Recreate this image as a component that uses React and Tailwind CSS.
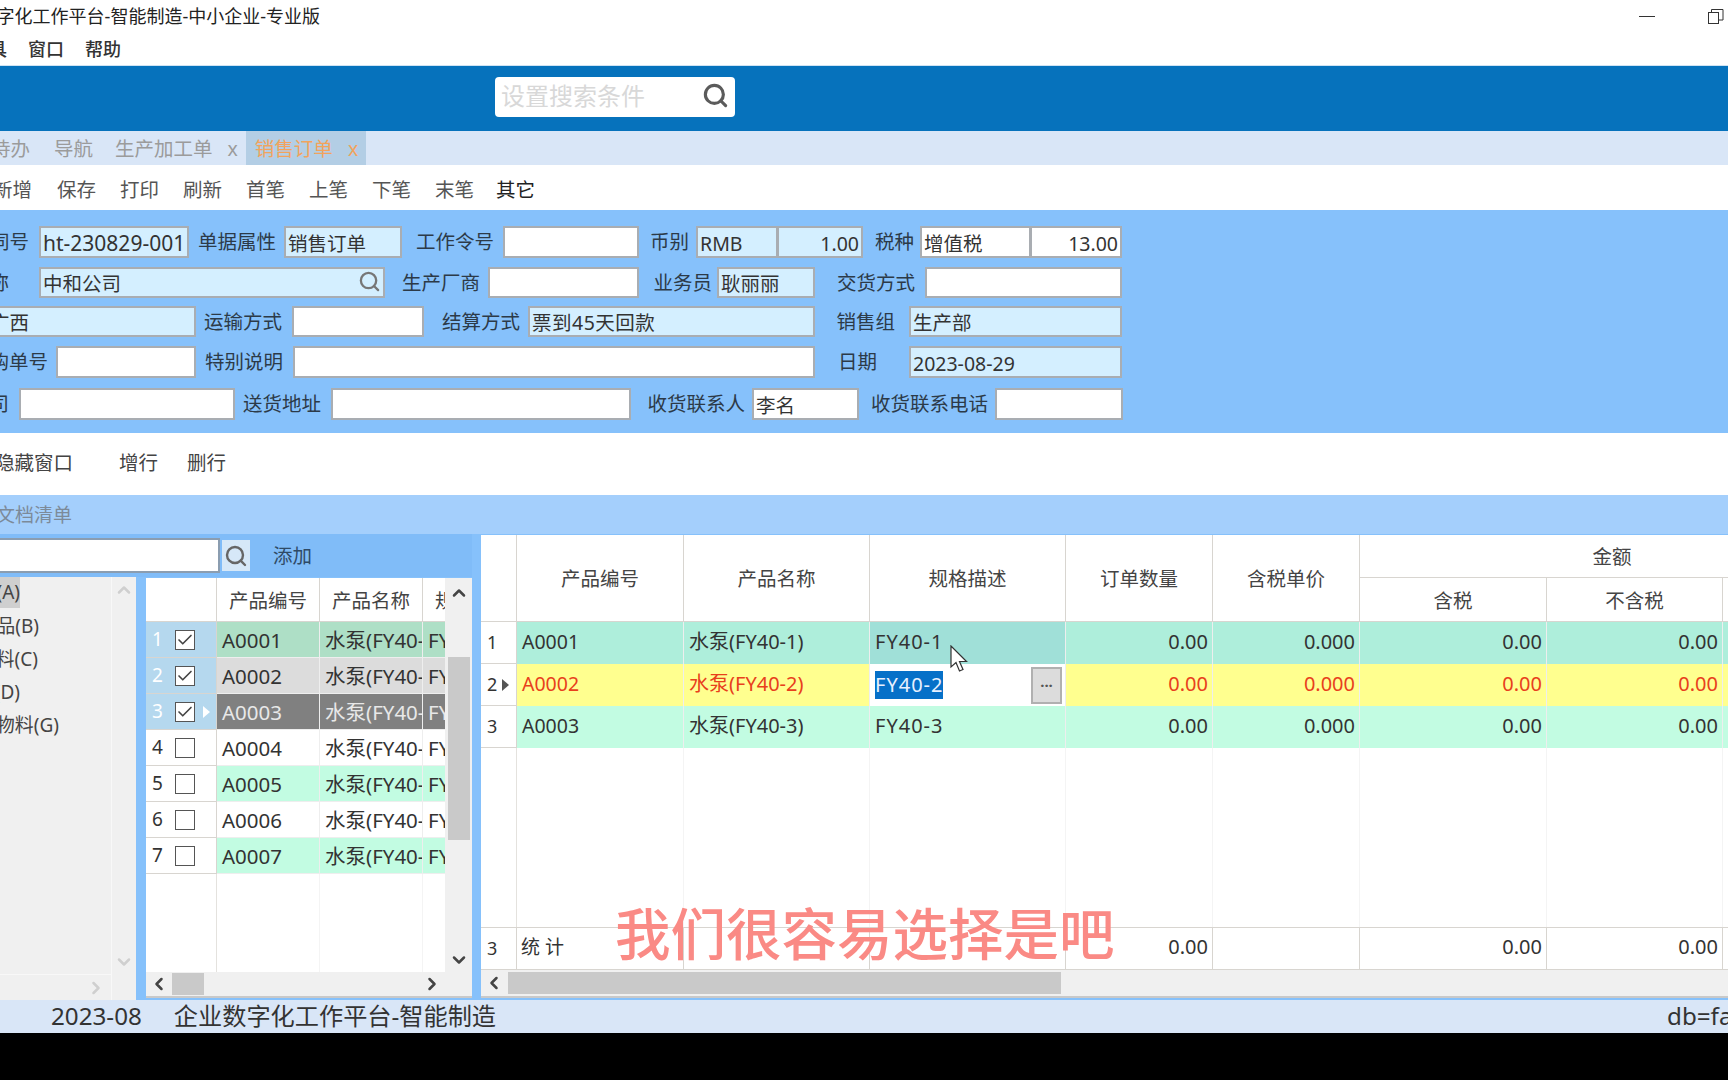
import { Search, ChevronUp, ChevronDown, ChevronLeft, ChevronRight, Check } from "lucide-react";

const leftRows = [
  { n: "1", code: "A0001", on: true, head: "bg-[#b5d8ee] text-white", cell: "bg-[#aedfc6] text-[#333]" },
  { n: "2", code: "A0002", on: true, head: "bg-[#b5d8ee] text-white", cell: "bg-[#dcdcdc] text-[#333]" },
  { n: "3", code: "A0003", on: true, cur: true, head: "bg-[#b5d8ee] text-white", cell: "bg-[#808080] text-[#e8e8e8]" },
  { n: "4", code: "A0004", head: "bg-white text-[#333]", cell: "bg-white text-[#333]" },
  { n: "5", code: "A0005", head: "bg-white text-[#333]", cell: "bg-[#c2fce2] text-[#333]" },
  { n: "6", code: "A0006", head: "bg-white text-[#333]", cell: "bg-white text-[#333]" },
  { n: "7", code: "A0007", head: "bg-white text-[#333]", cell: "bg-[#c2fce2] text-[#333]" },
];

const rightCols = "grid grid-cols-[36px_167px_186px_196px_147px_147px_187px_176px_1fr]";

function Lbl({ className, children }) {
  return (
    <div className={"flex h-full shrink-0 items-center justify-end overflow-hidden whitespace-nowrap text-[19.5px] text-[#2c3a48] " + className}>
      {children}
    </div>
  );
}

function Box({ className, children }) {
  return (
    <div className={"flex h-full shrink-0 items-center overflow-hidden whitespace-nowrap border-2 border-[#a9adb2] px-[2px] pt-[3px] text-[19.5px] text-[#333] " + className}>
      {children}
    </div>
  );
}

function NumCell({ className, children }) {
  return <div className={"flex items-center justify-end border-r border-[#eeeeee] pb-[2px] pr-[4px] text-[20px] " + className}>{children}</div>;
}

function TextCell({ className, children }) {
  return <div className={"flex items-center whitespace-nowrap border-r border-[#eeeeee] pb-[2px] pl-[5px] text-[20px] " + className}>{children}</div>;
}

function RightRow({ n, code, name, spec, row, text, specCell, mark }) {
  return (
    <div className={rightCols + " h-[42px] " + text}>
      <div className="flex items-center border-r border-b border-[#d8d5d0] bg-white pl-[6px] text-[18px] text-[#333]">
        {n}
        {mark && <div className="ml-[5px] h-0 w-0 border-y-[6px] border-l-[7px] border-y-transparent border-l-[#555]" />}
      </div>
      <TextCell className={row}><span className="text-[19.5px]">{code}</span></TextCell>
      <TextCell className={row}>{name}</TextCell>
      {specCell || <TextCell className={row}><span className="tracking-[1px]">{spec}</span></TextCell>}
      <NumCell className={row}>0.00</NumCell>
      <NumCell className={row}>0.000</NumCell>
      <NumCell className={row}>0.00</NumCell>
      <NumCell className={row}>0.00</NumCell>
      <div className={row} />
    </div>
  );
}

export default function App() {
  return (
    <div className="relative flex h-screen w-screen flex-col overflow-hidden bg-white font-['Noto_Sans','Noto_Sans_CJK_SC',sans-serif]">
      {/* title */}
      <div className="flex h-[33px] shrink-0 items-center justify-between">
        <div className="flex w-[320px] justify-end overflow-hidden whitespace-nowrap text-[18px] text-[#222]">企业数字化工作平台-智能制造-中小企业-专业版</div>
        <div className="flex items-center pr-[4px]">
          <div className="mr-[53px] h-px w-[16px] bg-[#333]" />
          <svg width="16" height="15" viewBox="0 0 16 15" fill="none" stroke="#333" strokeWidth="1">
            <rect x="0.5" y="3.5" width="10" height="11" fill="white" />
            <path d="M3.5 3.5V0.5H15V11H10.5" />
          </svg>
        </div>
      </div>
      <div className="flex h-[32px] shrink-0 items-center text-[18px] font-medium text-[#333]">
        <div className="flex w-[7px] justify-end overflow-hidden whitespace-nowrap">工具</div>
        <div className="ml-[21px]">窗口</div>
        <div className="ml-[21px]">帮助</div>
      </div>

      {/* blue band */}
      <div className="flex h-[66px] shrink-0 items-center border-t border-[#cfe3f3] bg-[#0672bc] pb-[4px] pl-[495px]">
        <div className="flex h-[40px] w-[240px] items-center justify-between rounded-[4px] bg-white pb-[2px] pl-[6px] pr-[6px] text-[24px] text-[#d8d8d8]">
          设置搜索条件
          <Search size={27} strokeWidth={2.8} className="text-[#5b5b5b]" />
        </div>
      </div>

      {/* tabs */}
      <div className="flex h-[34px] shrink-0 items-center bg-[#d9e6f7] text-[19.5px] text-[#9b9b9b]">
        <div className="flex w-[30px] justify-end overflow-hidden whitespace-nowrap pt-[2px]">待办</div>
        <div className="ml-[24px] pt-[2px]">导航</div>
        <div className="ml-[22px] pt-[2px]">生产加工单</div>
        <div className="ml-[15px] pt-[2px]">x</div>
        <div className="ml-[8px] flex h-full w-[120px] items-center bg-[#b3cee5] pl-[9px] pt-[2px] text-[#f2a35c]">
          销售订单
          <span className="ml-[15px]">x</span>
        </div>
      </div>

      {/* toolbar */}
      <div className="flex h-[45px] shrink-0 items-center gap-[24px] pt-[5px] text-[19.5px] text-[#555]">
        <div className="flex w-[32px] justify-end overflow-hidden whitespace-nowrap">新增</div>
        <div className="ml-[1px]">保存</div>
        <div>打印</div>
        <div>刷新</div>
        <div>首笔</div>
        <div>上笔</div>
        <div>下笔</div>
        <div>末笔</div>
        <div className="ml-[-2px] text-[#222]">其它</div>
      </div>

      {/* form */}
      <div className="h-[223px] shrink-0 overflow-hidden bg-[#86c1fb] pt-[16px]">
        <div className="flex h-[32px]">
          <Lbl className="w-[29px]">合同号</Lbl>
          <Box className="ml-[10px] w-[150px] bg-[#d4efff] text-[21px]">ht-230829-001</Box>
          <Lbl className="ml-[8px] w-[79px]">单据属性</Lbl>
          <Box className="ml-[8px] w-[118px] bg-[#d4efff]">销售订单</Box>
          <Lbl className="ml-[14px] w-[78px]">工作令号</Lbl>
          <Box className="ml-[9px] w-[136px] bg-white" />
          <Lbl className="ml-[12px] w-[38px]">币别</Lbl>
          <Box className="ml-[7px] w-[82px] bg-[#d4efff]">RMB</Box>
          <Box className="ml-[-1px] w-[86px] justify-end bg-[#d4efff]">1.00</Box>
          <Lbl className="ml-[11px] w-[40px]">税种</Lbl>
          <Box className="ml-[6px] w-[111px] bg-white">增值税</Box>
          <Box className="ml-[-1px] w-[92px] justify-end bg-white">13.00</Box>
        </div>
        <div className="mt-[9px] flex h-[31px]">
          <Lbl className="w-[9px]">名称</Lbl>
          <Box className="ml-[30px] w-[346px] justify-between bg-[#d4efff]">
            中和公司
            <Search size={23} strokeWidth={2.4} className="mb-[5px] text-[#777]" />
          </Box>
          <Lbl className="ml-[17px] w-[78px]">生产厂商</Lbl>
          <Box className="ml-[8px] w-[151px] bg-white" />
          <Lbl className="ml-[15px] w-[58px]">业务员</Lbl>
          <Box className="ml-[5px] w-[98px] bg-[#d4efff]">耿丽丽</Box>
          <Lbl className="ml-[21px] w-[79px]">交货方式</Lbl>
          <Box className="ml-[10px] w-[197px] bg-white" />
        </div>
        <div className="mt-[8px] flex h-[31px]">
          <Box className="ml-[-14px] w-[210px] bg-[#d4efff]">广西</Box>
          <Lbl className="ml-[8px] w-[78px]">运输方式</Lbl>
          <Box className="ml-[10px] w-[132px] bg-white" />
          <Lbl className="ml-[18px] w-[78px]">结算方式</Lbl>
          <Box className="ml-[8px] w-[287px] bg-[#d4efff] tracking-[0.5px]">票到45天回款</Box>
          <Lbl className="ml-[21px] w-[59px]">销售组</Lbl>
          <Box className="ml-[14px] w-[213px] bg-[#d4efff]">生产部</Box>
        </div>
        <div className="mt-[9px] flex h-[32px]">
          <Lbl className="w-[48px]">采购单号</Lbl>
          <Box className="ml-[8px] w-[140px] bg-white" />
          <Lbl className="ml-[9px] w-[78px]">特别说明</Lbl>
          <Box className="ml-[10px] w-[522px] bg-white" />
          <Lbl className="ml-[24px] w-[38px]">日期</Lbl>
          <Box className="ml-[32px] w-[213px] bg-[#d4efff]">2023-08-29</Box>
        </div>
        <div className="mt-[10px] flex h-[32px]">
          <Lbl className="w-[9px]">收货公司</Lbl>
          <Box className="ml-[10px] w-[216px] bg-white" />
          <Lbl className="ml-[8px] w-[78px]">送货地址</Lbl>
          <Box className="ml-[10px] w-[300px] bg-white" />
          <Lbl className="ml-[15px] w-[99px]">收货联系人</Lbl>
          <Box className="ml-[7px] w-[107px] bg-white">李名</Box>
          <Lbl className="ml-[11px] w-[118px]">收货联系电话</Lbl>
          <Box className="ml-[7px] w-[128px] bg-white" />
        </div>
      </div>

      {/* detail toolbar */}
      <div className="flex h-[62px] shrink-0 items-center pb-[2px] text-[19.5px] text-[#444]">
        <div className="flex w-[73px] justify-end overflow-hidden whitespace-nowrap">隐藏窗口</div>
        <div className="ml-[46px]">增行</div>
        <div className="ml-[29px]">删行</div>
      </div>

      <div className="flex h-[39px] shrink-0 items-center bg-[#a4cffc] pt-[1px] text-[19px] text-[#7c8a99]">
        <div className="flex w-[72px] justify-end overflow-hidden whitespace-nowrap">文档清单</div>
      </div>

      {/* lower area */}
      <div className="flex min-h-0 flex-1 bg-[#86c1fb]">
        <div className="flex w-[472px] shrink-0 flex-col">
          {/* lookup row */}
          <div className="flex h-[43px] shrink-0 items-center bg-[#80bcf8]">
            <div className="ml-[-4px] h-[35px] w-[224px] border-2 border-[#8b9db0] bg-white" />
            <div className="ml-[2px] flex h-[31px] w-[28px] items-center justify-center bg-[#d6e8f8]">
              <Search size={24} strokeWidth={2.4} className="text-[#666]" />
            </div>
            <div className="ml-[23px] text-[19.5px] text-[#2f4a66]">添加</div>
          </div>

          <div className="flex min-h-0 flex-1">
            {/* tree */}
            <div className="flex w-[136px] shrink-0 bg-[#f0f0f0] text-[19px] text-[#444]">
              <div className="flex w-[112px] flex-col border-r border-[#f8f8f8]">
                <div className="min-h-0 flex-1 overflow-hidden">
                  <div className="flex h-[31px] w-[20px] items-center justify-end overflow-hidden whitespace-nowrap bg-[#cfcfcf]">成品(A)</div>
                  <div className="mt-[2px] flex h-[33px] w-[39px] items-center justify-end overflow-hidden whitespace-nowrap">半成品(B)</div>
                  <div className="flex h-[33px] w-[38px] items-center justify-end overflow-hidden whitespace-nowrap">原材料(C)</div>
                  <div className="flex h-[33px] w-[20px] items-center justify-end overflow-hidden whitespace-nowrap">辅料(D)</div>
                  <div className="flex h-[33px] w-[59px] items-center justify-end overflow-hidden whitespace-nowrap">其他物料(G)</div>
                </div>
                <div className="flex h-[26px] items-center justify-end border-t border-[#f8f8f8] pr-[5px]">
                  <ChevronRight size={20} strokeWidth={3} className="text-[#cfcfcf]" />
                </div>
              </div>
              <div className="flex w-[24px] flex-col items-center justify-between pb-[28px] pt-[3px]">
                <ChevronUp size={20} strokeWidth={3} className="text-[#cfcfcf]" />
                <ChevronDown size={20} strokeWidth={3} className="text-[#cfcfcf]" />
              </div>
            </div>

            {/* left grid */}
            <div className="mb-[2px] ml-[10px] mt-[1px] flex w-[326px] shrink-0 flex-col overflow-hidden border-b-2 border-[#c9c9c9] bg-white">
              <div className="flex min-h-0 flex-1">
                <div className="flex min-w-0 flex-1 flex-col">
                  <div className="flex h-[44px] shrink-0 border-b border-[#d8d5d0] text-[19.5px] text-[#444]">
                    <div className="w-[71px] border-r border-[#d8d5d0]" />
                    <div className="flex w-[103px] items-center justify-center border-r border-[#d8d5d0] pt-[2px]">产品编号</div>
                    <div className="flex w-[103px] items-center justify-center border-r border-[#d8d5d0] pt-[2px]">产品名称</div>
                    <div className="min-w-0 flex-1 overflow-hidden whitespace-nowrap pl-[12px] pt-[8px]">规格</div>
                  </div>
                  {leftRows.map((r) => (
                    <div key={r.n} className="flex h-[36px] shrink-0 text-[20.5px]">
                      <div className={"flex w-[71px] items-center border-r border-b border-[#d8d5d0] pl-[6px] text-[19px] " + r.head}>
                        <span className="w-[23px]">{r.n}</span>
                        <div className="flex h-[20px] w-[20px] items-center justify-center border border-[#555] bg-white">
                          {r.on && <Check size={18} strokeWidth={2.2} className="text-[#444]" />}
                        </div>
                        {r.cur && <div className="ml-[8px] h-0 w-0 border-y-[6px] border-l-[7px] border-y-transparent border-l-white" />}
                      </div>
                      <div className={"flex w-[103px] items-center border-r border-b border-[#eeeeee] pl-[5px] pt-[1px] " + r.cell}>{r.code}</div>
                      <div className={"flex w-[103px] items-center overflow-hidden whitespace-nowrap border-r border-b border-[#eeeeee] pl-[5px] pt-[1px] " + r.cell}>水泵(FY40-</div>
                      <div className={"min-w-0 flex-1 overflow-hidden whitespace-nowrap border-b border-[#eeeeee] pl-[5px] leading-[36px] " + r.cell}>FY40</div>
                    </div>
                  ))}
                  <div className="flex min-h-0 flex-1">
                    <div className="w-[71px] border-r border-[#e4e2de]" />
                    <div className="w-[103px] border-r border-[#f4f4f4]" />
                    <div className="w-[103px] border-r border-[#f4f4f4]" />
                  </div>
                </div>
                <div className="flex w-[27px] shrink-0 flex-col items-center bg-[#f0f0f0]">
                  <div className="flex h-[79px] w-full shrink-0 items-start justify-center pt-[5px]">
                    <ChevronUp size={20} strokeWidth={3} className="text-[#444]" />
                  </div>
                  <div className="h-[183px] w-[22px] shrink-0 bg-[#c9c9c9]" />
                  <div className="flex w-full flex-1 items-end justify-center pb-[2px]">
                    <ChevronDown size={20} strokeWidth={3} className="text-[#444]" />
                  </div>
                </div>
              </div>
              <div className="flex h-[24px] shrink-0 items-center bg-[#f0f0f0]">
                <ChevronLeft size={20} strokeWidth={3} className="ml-[3px] text-[#444]" />
                <div className="ml-[3px] h-[22px] w-[32px] bg-[#c9c9c9]" />
                <ChevronRight size={20} strokeWidth={3} className="ml-[218px] text-[#444]" />
              </div>
            </div>
          </div>
        </div>

        {/* right grid */}
        <div className="mb-[2px] ml-[9px] mt-[1px] flex min-w-0 flex-1 flex-col border-b-2 border-[#c9c9c9] bg-white">
          <div className={rightCols + " h-[87px] shrink-0 border-b border-[#d8d5d0] text-[19.5px] text-[#444]"}>
            <div className="border-r border-[#d8d5d0]" />
            <div className="flex items-center justify-center border-r border-[#d8d5d0] pt-[2px]">产品编号</div>
            <div className="flex items-center justify-center border-r border-[#d8d5d0] pt-[2px]">产品名称</div>
            <div className="flex items-center justify-center border-r border-[#d8d5d0] pt-[2px]">规格描述</div>
            <div className="flex items-center justify-center border-r border-[#d8d5d0] pt-[2px]">订单数量</div>
            <div className="flex items-center justify-center border-r border-[#d8d5d0] pt-[2px]">含税单价</div>
            <div className="col-span-3 flex flex-col overflow-hidden">
              <div className="h-[43px] border-b border-[#d8d5d0]">
                <div className="flex h-full w-[504px] items-center justify-center pt-[2px]">金额</div>
              </div>
              <div className="flex flex-1">
                <div className="flex w-[187px] items-center justify-center border-r border-[#d8d5d0] pt-[2px]">含税</div>
                <div className="flex w-[176px] items-center justify-center border-r border-[#d8d5d0] pt-[2px]">不含税</div>
              </div>
            </div>
          </div>
          <RightRow n="1" code="A0001" name="水泵(FY40-1)" row="bg-[#aeeedb]" text="text-[#333]"
            specCell={<TextCell className="bg-[#a0e0d8]"><span className="tracking-[1px]">FY40-1</span></TextCell>} />
          <RightRow n="2" code="A0002" name="水泵(FY40-2)" row="bg-[#ffff8f]" text="text-[#e8401c]" mark
            specCell={
              <div className="flex items-center justify-between border-r border-[#eeeeee] bg-white pl-[5px] pr-[3px]">
                <span className="bg-[#0670c8] text-[20px] leading-[28px] tracking-[1px] text-[#e8f0ff]">FY40-2</span>
                <div className="flex h-[37px] w-[31px] items-center justify-center border-2 border-[#b0b0b0] bg-[#dcdcdc] text-[15px] font-bold leading-none text-[#555]">···</div>
              </div>
            } />
          <RightRow n="3" code="A0003" name="水泵(FY40-3)" spec="FY40-3" row="bg-[#c2fce2]" text="text-[#333]" />
          <div className={rightCols + " min-h-0 flex-1"}>
            <div className="border-r border-[#e4e2de]" />
            <div className="border-r border-[#f4f4f4]" />
            <div className="border-r border-[#f4f4f4]" />
            <div className="border-r border-[#f4f4f4]" />
            <div className="border-r border-[#f4f4f4]" />
            <div className="border-r border-[#f4f4f4]" />
            <div className="border-r border-[#f4f4f4]" />
            <div className="border-r border-[#f4f4f4]" />
          </div>
          <div className={rightCols + " h-[43px] shrink-0 border-y border-[#d8d5d0] text-[20px] text-[#333]"}>
            <div className="flex items-center border-r border-[#d8d5d0] pl-[6px] text-[18px]">3</div>
            <div className="flex items-center border-r border-[#d8d5d0] pb-[2px] pl-[4px] text-[19px]">统 计</div>
            <div className="border-r border-[#d8d5d0]" />
            <div className="border-r border-[#d8d5d0]" />
            <div className="flex items-center justify-end border-r border-[#d8d5d0] pb-[3px] pr-[4px]">0.00</div>
            <div className="border-r border-[#d8d5d0]" />
            <div className="flex items-center justify-end border-r border-[#d8d5d0] pb-[3px] pr-[4px]">0.00</div>
            <div className="flex items-center justify-end border-r border-[#d8d5d0] pb-[3px] pr-[4px]">0.00</div>
          </div>
          <div className="flex h-[26px] shrink-0 items-center bg-[#f0f0f0]">
            <ChevronLeft size={20} strokeWidth={3} className="ml-[3px] text-[#444]" />
            <div className="ml-[4px] h-[22px] w-[553px] bg-[#c9c9c9]" />
          </div>
        </div>
      </div>

      {/* status */}
      <div className="flex h-[33px] shrink-0 items-center justify-between bg-[#d9e6f7] text-[24.2px] text-[#333]">
        <div className="flex">
          <div className="ml-[51px]">2023-08</div>
          <div className="ml-[32px]">企业数字化工作平台-智能制造</div>
        </div>
        <div className="w-[61px] overflow-hidden whitespace-nowrap">db=false</div>
      </div>
      <div className="h-[47px] shrink-0 bg-black" />

      {/* video caption over the window */}
      <div className="absolute left-[615px] top-[902px] whitespace-nowrap text-[55.5px] font-medium leading-[64px] text-[#fa8a85]">我们很容易选择是吧</div>

      {/* mouse pointer */}
      <svg className="absolute left-[950px] top-[645px]" width="20" height="28" viewBox="0 0 20 28">
        <path d="M1 1V22L6 17.5L9.5 26L13 24.5L9.5 16.5H16.5Z" fill="white" stroke="#333" strokeWidth="1.2" />
      </svg>
    </div>
  );
}
